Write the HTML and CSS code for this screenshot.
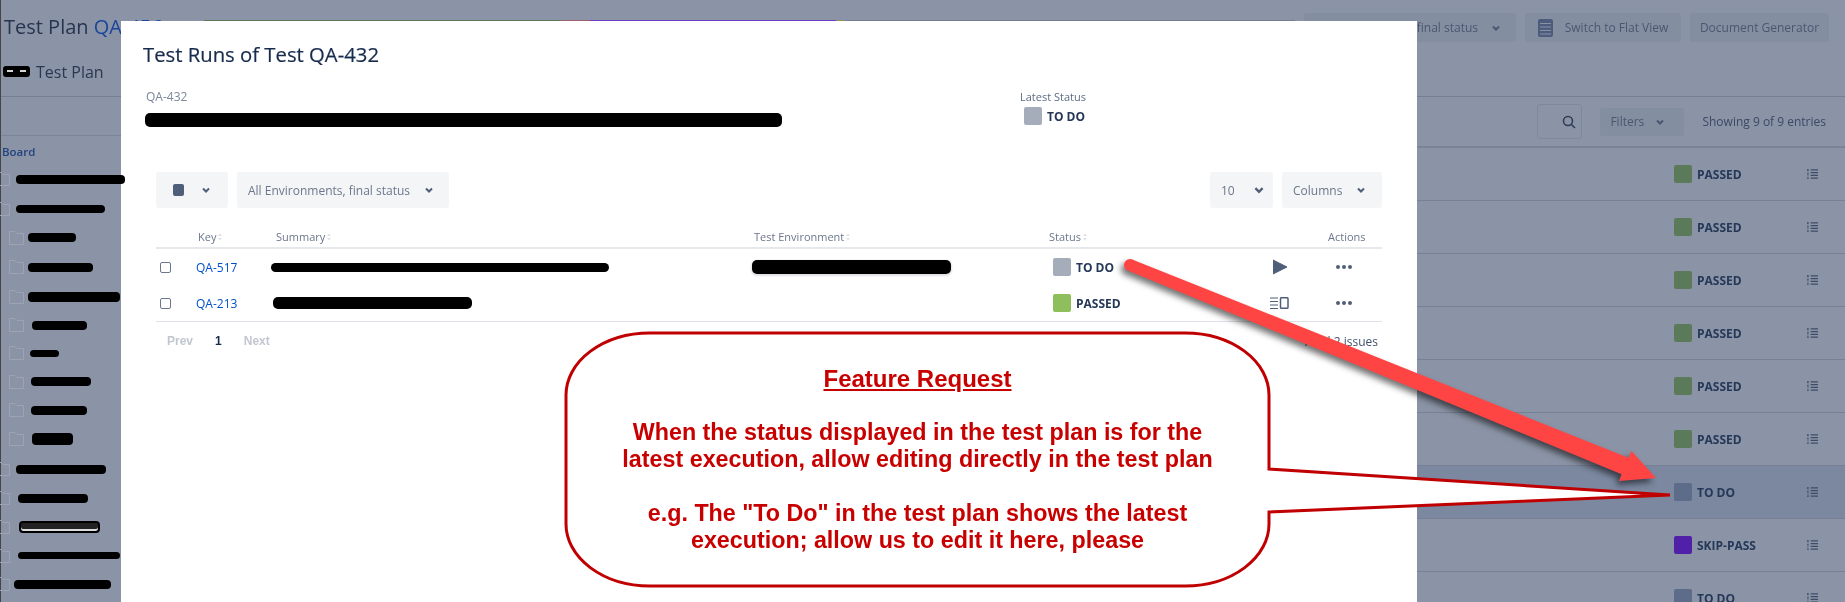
FILE: index.html
```html
<!DOCTYPE html>
<html lang="en">
<head>
<meta charset="utf-8">
<title>Test Plan</title>
<link rel="stylesheet" href="styles.css">
</head>
<body>
<svg class="defs" width="0" height="0" aria-hidden="true">
  <symbol id="i-chev" viewBox="0 0 10 10"><path d="M2 3.5 5 6.5 8 3.5" fill="none" stroke="currentColor" stroke-width="2"/></symbol>
  <symbol id="i-folder" viewBox="0 0 15 14"><path d="M.5 13.5V.5H6L8 2.5H14.5V13.5Z" fill="none" stroke="currentColor"/></symbol>
  <symbol id="i-list" viewBox="0 0 12 12"><path d="M4 1.5H12M4 4.500H12M4 7.500H12M4 10.500H12" stroke="currentColor" stroke-width="1.400"/><path d="M1 .5V3M1 4.500V6.500M1 7.500V8.500M0 10.500H2" stroke="currentColor" stroke-width="1.500"/></symbol>
  <symbol id="i-sort" viewBox="0 0 4 8"><path d="M0 3 2 .5 4 3ZM0 5 2 7.500 4 5Z" fill="currentColor"/></symbol>
</svg>
<div class="stage">
  <div class="page">
    <header class="topbar">
      <h1 class="plan-title">Test Plan <a class="plan-key">QA-456</a><svg class="plan-lock" width="8" height="10" viewBox="0 0 8 10"><path d="M1 9V5C1 .5 7 .5 7 5V9" fill="none" stroke="#2d3a56" stroke-width="1.500"/></svg></h1>
      <div class="progress"><i class="p-green"></i><i class="p-red"></i><i class="p-purple"></i><i class="p-olive"></i><i class="p-gray"></i></div>
      <div class="top-actions">
        <button class="dim-btn env-btn">All Environments, final status<svg class="chev"><use href="#i-chev"/></svg></button>
        <button class="dim-btn flat-btn"><svg class="flat-icon" width="15" height="18" viewBox="0 0 15 18"><rect width="15" height="18" rx="2" fill="#4d5c7c"/><path d="M2 4.500H13M2 8H13M2 11.500H13M2 15H13" stroke="#8791a4" stroke-width="1"/></svg>Switch to Flat View</button>
        <button class="dim-btn doc-btn">Document Generator</button>
      </div>
    </header>
    <div class="subhead"><span class="sub-blob"></span><span class="sub-title">Test Plan</span></div>
    <div class="workspace">
      <aside class="sidebar">
        <div class="side-spacer"></div>
        <div class="board">Board</div>
        <ul class="tree">
          <li class="node"><svg class="folder"><use href="#i-folder"/></svg><span class="blob"></span></li>
          <li class="node"><svg class="folder"><use href="#i-folder"/></svg><span class="blob"></span></li>
          <li class="node sub"><svg class="folder"><use href="#i-folder"/></svg><span class="blob"></span></li>
          <li class="node sub"><svg class="folder"><use href="#i-folder"/></svg><span class="blob"></span></li>
          <li class="node sub"><svg class="folder"><use href="#i-folder"/></svg><span class="blob"></span></li>
          <li class="node sub"><svg class="folder"><use href="#i-folder"/></svg><span class="blob"></span></li>
          <li class="node sub"><svg class="folder"><use href="#i-folder"/></svg><span class="blob"></span></li>
          <li class="node sub"><svg class="folder"><use href="#i-folder"/></svg><span class="blob"></span></li>
          <li class="node sub"><svg class="folder"><use href="#i-folder"/></svg><span class="blob"></span></li>
          <li class="node sub"><svg class="folder"><use href="#i-folder"/></svg><span class="blob"></span></li>
          <li class="node"><svg class="folder"><use href="#i-folder"/></svg><span class="blob"></span></li>
          <li class="node"><svg class="folder"><use href="#i-folder"/></svg><span class="blob"></span></li>
          <li class="node"><svg class="folder"><use href="#i-folder"/></svg><span class="blob"></span></li>
          <li class="node"><svg class="folder"><use href="#i-folder"/></svg><span class="blob"></span></li>
          <li class="node"><svg class="folder"><use href="#i-folder"/></svg><span class="blob"></span></li>
        </ul>
      </aside>
      <main class="plan">
        <div class="plan-tools">
          <div class="search"><svg width="14" height="14" viewBox="0 0 14 14"><circle cx="6" cy="6" r="4.500" fill="none" stroke="#2d3a56" stroke-width="1.500"/><path d="M9.500 9.500 13 13" stroke="#2d3a56" stroke-width="1.500"/></svg></div>
          <button class="dim-btn filters">Filters<svg class="chev"><use href="#i-chev"/></svg></button>
          <span class="entries">Showing 9 of 9 entries</span>
        </div>
        <div class="plan-row"><span class="st sq-pass"></span><b class="st-name">PASSED</b><svg class="list"><use href="#i-list"/></svg></div>
        <div class="plan-row"><span class="st sq-pass"></span><b class="st-name">PASSED</b><svg class="list"><use href="#i-list"/></svg></div>
        <div class="plan-row"><span class="st sq-pass"></span><b class="st-name">PASSED</b><svg class="list"><use href="#i-list"/></svg></div>
        <div class="plan-row"><span class="st sq-pass"></span><b class="st-name">PASSED</b><svg class="list"><use href="#i-list"/></svg></div>
        <div class="plan-row"><span class="st sq-pass"></span><b class="st-name">PASSED</b><svg class="list"><use href="#i-list"/></svg></div>
        <div class="plan-row"><span class="st sq-pass"></span><b class="st-name">PASSED</b><svg class="list"><use href="#i-list"/></svg></div>
        <div class="plan-row hl"><span class="st sq-todo"></span><b class="st-name">TO DO</b><svg class="list"><use href="#i-list"/></svg></div>
        <div class="plan-row"><span class="st sq-skip"></span><b class="st-name">SKIP-PASS</b><svg class="list"><use href="#i-list"/></svg></div>
        <div class="plan-row"><span class="st sq-todo"></span><b class="st-name">TO DO</b><svg class="list"><use href="#i-list"/></svg></div>
      </main>
    </div>
  </div>

  <section class="modal">
    <h2 class="modal-title">Test Runs of Test QA-432</h2>
    <div class="meta">
      <div class="meta-main">
        <div class="meta-key">QA-432</div>
        <span class="redact r-desc"></span>
      </div>
      <div class="meta-status">
        <div class="meta-label">Latest Status</div>
        <div class="status"><span class="st sq-gray"></span><b>TO DO</b></div>
      </div>
    </div>
    <div class="tools">
      <button class="tool t-square"><span class="mini-square"></span><svg class="chev"><use href="#i-chev"/></svg></button>
      <button class="tool t-env">All Environments, final status<svg class="chev"><use href="#i-chev"/></svg></button>
      <button class="tool t-size">10<svg class="chev big"><use href="#i-chev"/></svg></button>
      <button class="tool t-cols">Columns<svg class="chev"><use href="#i-chev"/></svg></button>
    </div>
    <div class="table">
      <div class="tr th">
        <span></span>
        <span class="h-key">Key<svg class="sort"><use href="#i-sort"/></svg></span>
        <span>Summary<svg class="sort"><use href="#i-sort"/></svg></span>
        <span>Test Environment<svg class="sort"><use href="#i-sort"/></svg></span>
        <span>Status<svg class="sort"><use href="#i-sort"/></svg></span>
        <span></span>
        <span class="h-actions">Actions</span>
      </div>
      <div class="tr">
        <span class="check"></span>
        <a class="key">QA-517</a>
        <span><span class="redact r-sum1"></span></span>
        <span><span class="redact r-env"></span></span>
        <span class="status"><span class="st sq-gray"></span><b>TO DO</b></span>
        <span><svg class="play" width="14" height="16" viewBox="0 0 14 16"><path d="M0 1 14 8 0 15Z" fill="#505f79" stroke="#505f79" stroke-linejoin="round"/></svg></span>
        <span class="dots"><i></i><i></i><i></i></span>
      </div>
      <div class="tr">
        <span class="check"></span>
        <a class="key">QA-213</a>
        <span><span class="redact r-sum2"></span></span>
        <span></span>
        <span class="status"><span class="st sq-green"></span><b>PASSED</b></span>
        <span><svg class="exec" width="19" height="12" viewBox="0 0 19 12"><path d="M0 1H8M0 4.500H8M0 8H8M0 11.500H8" stroke="#505f79" stroke-width="1.200"/><rect x="10.500" y=".7" width="7.500" height="10.600" rx="1" fill="none" stroke="#505f79" stroke-width="1.500"/></svg></span>
        <span class="dots"><i></i><i></i><i></i></span>
      </div>
    </div>
    <div class="pager">
      <span class="pg">Prev</span><span class="pg cur">1</span><span class="pg">Next</span>
      <span class="total">Total 2 issues</span>
    </div>
  </section>

  <svg class="notes" width="1845" height="602" viewBox="0 0 1845 602" aria-hidden="true">
    <g class="arrow">
      <circle cx="1130" cy="265" r="6"/>
      <polygon points="1127.800,270.600 1132.200,259.400 1628.400,457.700 1631.500,451 1656,478 1619,481 1621.600,474.300"/>
    </g>
    <path class="bubble" d="M650 333H1185A84 62 0 0 1 1269 395V469L1670 495 1269 512V524A84 62 0 0 1 1185 586H650A84 62 0 0 1 566 524V395A84 62 0 0 1 650 333Z"/>
  </svg>
  <div class="note-text">
    <p class="note-head">Feature Request</p>
    <p>When the status displayed in the test plan is for the<br>latest execution, allow editing directly in the test plan</p>
    <p>e.g. The "To Do" in the test plan shows the latest<br>execution; allow us to edit it here, please</p>
  </div>
</div>
</body>
</html>
```

FILE: styles.css
```css
* { box-sizing: border-box; }
html, body { margin: 0; padding: 0; }
body { font-family: "Open Sans", "Liberation Sans", sans-serif; font-size: 12px; color: #172b4d; }
button { font: inherit; border: 0; padding: 0; }
h1, h2, p, ul { margin: 0; padding: 0; }
ul { list-style: none; }
.defs { position: absolute; }

.stage { position: relative; width: 1845px; height: 602px; overflow: hidden; background: #8b94a6; filter: blur(.4px); }
.page { width: 1845px; height: 602px; border-left: 1px solid #454545; color: #2d3a56; }

/* header */
.topbar { display: flex; height: 55px; padding: 13px 16px 0 3px; }
.plan-title { width: 200px; font-size: 20px; line-height: 28px; font-weight: 400; color: #28344f; white-space: nowrap; }
.plan-key { color: #1a459a; }
.plan-lock { margin-left: 5px; }
.progress { display: flex; width: 1091px; height: 2px; margin-top: 7px; }
.progress i { display: block; height: 2px; }
.p-green { width: 357px; background: #5b7a5a; }
.p-red { width: 29px; background: #a0616e; }
.p-purple { width: 246px; background: #6a3fc0; }
.p-olive { width: 9px; background: #8f8f66; }
.p-gray { flex: 1; background: #737e93; }
.top-actions { display: flex; gap: 9px; margin-left: auto; height: 29px; }
.dim-btn { display: flex; align-items: center; justify-content: center; height: 100%; background: #848ea1; color: #4a5771; border-radius: 3px; font-size: 12px; white-space: nowrap; }
.env-btn { width: 212px; justify-content: flex-end; padding-right: 15px; }
.env-btn .chev { margin-left: 13px; }
.flat-btn { width: 156px; gap: 12px; }
.doc-btn { width: 139px; }
.chev { width: 10px; height: 10px; margin-left: 11px; color: inherit; flex: none; }

.subhead { display: flex; align-items: center; height: 42px; padding: 0 0 8px 2px; border-bottom: 1px solid #757f93; }
.sub-blob { position: relative; width: 27px; height: 11px; background: #000; border-radius: 3px; }
.sub-blob::after { content: ""; position: absolute; left: 4px; right: 4px; top: 4px; border-top: 2px dashed #d5d5d5; }
.sub-title { margin-left: 6px; font-size: 16px; line-height: 22px; color: #2a3752; }

.workspace { display: grid; grid-template-columns: 120px 1fr; }

/* sidebar */
.side-spacer { height: 39px; border-bottom: 1px solid #7b8598; }
.board { height: 22px; margin-top: 5px; padding-left: 1px; font-weight: 600; font-size: 11.500px; line-height: 22px; color: #22427e; }
.node { display: flex; align-items: center; height: 29px; color: #9ca4b3; }
.folder { width: 15px; height: 14px; margin-left: -6px; flex: none; }
.node.sub .folder { margin-left: 8px; }
.blob { position: relative; z-index: 3; display: block; height: 9px; margin-left: 6px; background: #000; border-radius: 4px; flex: none; }
.node:nth-child(1) { height: 32px; } .node:nth-child(1) .blob { width: 109px; }
.node:nth-child(2) { height: 28px; } .node:nth-child(2) .blob { width: 89px; height: 8px; }
.node:nth-child(3) { height: 29px; } .node:nth-child(3) .blob { width: 48px; margin-left: 4px; }
.node:nth-child(4) { height: 30px; } .node:nth-child(4) .blob { width: 65px; margin-left: 4px; }
.node:nth-child(5) { height: 29px; } .node:nth-child(5) .blob { width: 92px; margin-left: 4px; height: 10px; }
.node:nth-child(6) { height: 28px; } .node:nth-child(6) .blob { width: 55px; margin-left: 8px; }
.node:nth-child(7) { height: 28px; } .node:nth-child(7) .blob { width: 29px; margin-left: 6px; height: 7px; }
.node:nth-child(8) { height: 29px; } .node:nth-child(8) .blob { width: 60px; margin-left: 7px; }
.node:nth-child(9) { height: 28px; } .node:nth-child(9) .blob { width: 56px; margin-left: 7px; }
.node:nth-child(10) { height: 30px; } .node:nth-child(10) .blob { width: 41px; margin-left: 8px; height: 12px; }
.node:nth-child(11) { height: 30px; } .node:nth-child(11) .blob { width: 90px; }
.node:nth-child(12) { height: 28px; } .node:nth-child(12) .blob { width: 70px; margin-left: 8px; }
.node:nth-child(13) { height: 29px; } .node:nth-child(13) .blob { width: 81px; margin-left: 9px; height: 12px; border: 2px solid #000; background: #222; box-shadow: inset 0 -2px 0 #ddd; }
.node:nth-child(14) { height: 29px; } .node:nth-child(14) .blob { width: 102px; margin-left: 8px; height: 7px; }
.node:nth-child(15) { height: 28px; } .node:nth-child(15) .blob { width: 97px; margin-left: 4px; }

/* plan table */
.plan-tools { display: flex; align-items: center; justify-content: flex-end; height: 51px; padding-right: 19px; border-bottom: 2px solid #7a8497; }
.search { display: flex; align-items: center; justify-content: flex-end; width: 45px; height: 35px; margin-right: 18px; padding-right: 5px; border: 1px solid #7e899d; border-radius: 3px; }
.filters { justify-content: flex-start; width: 84px; height: 28px; margin-right: 18px; padding-left: 10px; }
.entries { color: #3b4865; white-space: nowrap; }
.plan-row { display: flex; align-items: center; height: 53px; padding-left: 1553px; border-bottom: 1px solid #778195; }
.plan-row.hl { background: #7b88a0; }
.st { display: block; width: 18px; height: 18px; border-radius: 2px; flex: none; }
.sq-pass { background: #5b7a5a; }
.sq-todo { background: #5d6c88; }
.sq-skip { background: #5020a8; }
.sq-gray { background: #a5adba; }
.sq-green { background: #8fbf5c; }
.st-name { width: 110px; margin-left: 5px; font-weight: 700; font-size: 12px; color: #253858; }
.list { width: 11px; height: 12px; color: #3f4c68; }

/* modal */
.modal { position: absolute; z-index: 2; left: 121px; top: 21px; width: 1296px; height: 581px; padding: 19px 35px 0; background: #fff; display: flex; flex-direction: column; }
.modal-title { margin-left: -13px; font-size: 20.300px; line-height: 28px; font-weight: 400; color: #172b4d; -webkit-text-stroke: .2px #172b4d; }
.meta { display: flex; flex: none; height: 104px; padding-top: 21px; margin-left: -10px; }
.meta-main { width: 874px; }
.meta-key { font-size: 12px; line-height: 16px; color: #7a869a; }
.redact { display: block; background: #000; border-radius: 5px; }
.r-desc { width: 637px; height: 14px; margin-top: 8px; margin-left: -1px; }
.meta-label { font-size: 11px; line-height: 15px; color: #5e6c84; }
.meta-status .status { margin-top: 3px; margin-left: 4px; }
.status { display: flex; align-items: center; gap: 5px; font-size: 12px; color: #253858; }
.status b { font-weight: 700; }

.tools { display: flex; flex: none; gap: 9px; height: 36px; }
.tool { display: flex; align-items: center; height: 36px; background: #f4f5f7; border-radius: 3px; color: #6b778c; font-size: 12px; white-space: nowrap; }
.t-square { width: 72px; padding-left: 17px; color: #505f79; }
.mini-square { width: 11px; height: 12px; background: #505f79; border-radius: 2px; }
.t-square .chev { margin-left: 17px; }
.t-env { width: 212px; padding-left: 11px; }
.t-env .chev { margin-left: 14px; color: #505f79; }
.t-size { width: 63px; margin-left: auto; padding-left: 11px; }
.t-size .chev { margin-left: 18px; }
.chev.big { width: 12px; height: 12px; color: #505f79; }
.t-cols { width: 100px; padding-left: 11px; }
.t-cols .chev { margin-left: 14px; color: #505f79; }

.table { flex: none; border-bottom: 1px solid #dfe1e6; }
.tr { display: grid; grid-template-columns: 40px 80px 478px 295px 221px 60px 52px; align-items: center; height: 36px; }
.tr > span { display: block; }
.tr.th { height: 41px; padding-top: 17px; border-bottom: 2px solid #e6e8ec; font-size: 11px; font-weight: 400; color: #6b778c; }
.tr.th .h-key { margin-left: 2px; }
.tr.th .h-actions { margin-left: -2px; }
.sort { width: 4px; height: 8px; margin-left: 2px; color: #dfe1e6; }
.tr > .check { width: 11px; height: 11px; margin-left: 4px; border: 1px solid #6b778c; border-radius: 2px; }
.key { color: #0052cc; font-size: 12px; }
.r-sum1 { width: 338px; height: 9px; margin-left: -5px; }
.r-sum2 { width: 199px; height: 12px; margin-left: -3px; }
.r-env { width: 199px; height: 14px; margin-left: -2px; box-shadow: 0 1px 2px 1px #dfe1e6; }
.tr > .status { display: flex; margin-left: 4px; }
.play { display: block; margin-left: 3px; }
.exec { display: block; }
.tr > .dots { display: flex; gap: 2px; margin-left: 6px; }
.dots i { width: 4px; height: 4px; background: #505f79; border-radius: 50%; }

.pager { display: flex; align-items: center; height: 38px; padding-left: 11px; }
.pg { font-weight: 700; font-family: "Liberation Sans", sans-serif; color: #c1c7d0; font-size: 12px; margin-right: 22px; }
.pg.cur { color: #172b4d; }
.total { margin-left: auto; padding-right: 4px; color: #42526e; }

/* annotations */
.notes { position: absolute; z-index: 4; left: 0; top: 0; pointer-events: none; }
.arrow { fill: #ff4444; filter: drop-shadow(-3px 4px 3px rgba(0, 0, 0, .55)); }
.bubble { fill: #fff; stroke: #c00000; stroke-width: 3; stroke-linejoin: miter; }
.note-text { position: absolute; z-index: 5; left: 566px; top: 365px; width: 703px; text-align: center; font-family: "Liberation Sans", Arial, sans-serif; font-weight: 700; font-size: 23.300px; line-height: 27px; color: #c80000; }
.note-text p { margin-bottom: 27px; }
.note-head { font-size: 24px; text-decoration: underline; }
```
